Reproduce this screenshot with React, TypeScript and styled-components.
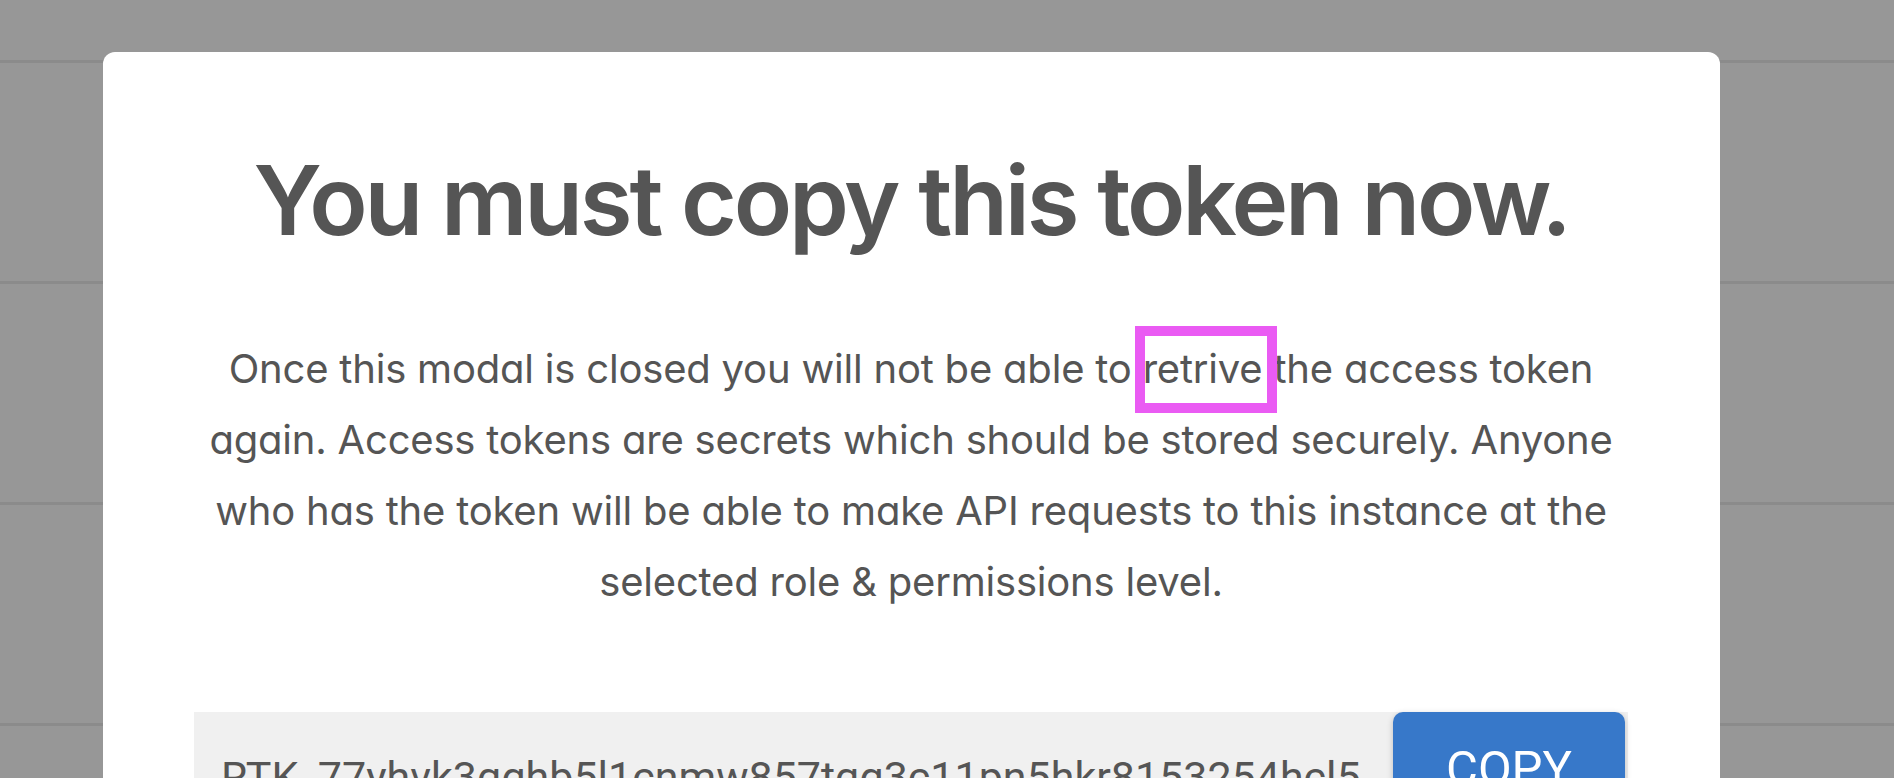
import styled, { createGlobalStyle } from 'styled-components';

const GlobalStyle = createGlobalStyle`
  html, body {
    margin: 0;
    padding: 0;
  }
  body {
    background-color: #979797;
    font-family: Inter, "Noto Sans", sans-serif;
    overflow: hidden;
  }
`;

const Page = styled.div`
  position: relative;
  height: 778px;
  overflow: hidden;
`;

const Table = styled.div`
  display: flex;
  flex-direction: column;
`;

const TableRow = styled.div<{ $first?: boolean }>`
  height: ${(p) => (p.$first ? 60 : 218)}px;
  border-bottom: 3px solid #8b8b8b;
`;

const Overlay = styled.div`
  position: absolute;
  inset: 0;
  display: flex;
  align-items: flex-start;
  padding: 52px 0 0 103px;
`;

const Modal = styled.div`
  width: 1617px;
  min-height: 900px;
  box-sizing: border-box;
  padding: 88px 92px 0 91px;
  background-color: #fff;
  border-radius: 12px;
  display: flex;
  flex-direction: column;
  align-items: center;
`;

const Title = styled.h1`
  margin: 0;
  font-size: 96px;
  line-height: 120px;
  font-weight: 600;
  letter-spacing: -3.2px;
  color: #555;
  text-align: center;
  white-space: nowrap;
`;

const Description = styled.p`
  margin: 73px 0 0;
  font-size: 40px;
  line-height: 71px;
  font-weight: 400;
  letter-spacing: -0.2px;
  color: #555;
  text-align: center;
  white-space: nowrap;
  font-feature-settings: 'cv11' 1;
`;

const Highlight = styled.span`
  position: relative;

  &::after {
    content: '';
    position: absolute;
    left: -8px;
    right: -15px;
    top: -18px;
    bottom: -20px;
    border: 10px solid #ea5bf3;
  }
`;

const TokenGroup = styled.div`
  margin-top: 95px;
  width: 100%;
  height: 130px;
  box-sizing: border-box;
  padding-right: 3px;
  display: flex;
  align-items: flex-start;
  background-color: #f0f0f0;
`;

const TokenInput = styled.input`
  flex: 1;
  min-width: 0;
  height: 130px;
  padding: 0 0 0 27px;
  border: none;
  outline: none;
  background: transparent;
  font-family: Roboto, "Liberation Sans", sans-serif;
  font-size: 43px;
  color: #555;
`;

const CopyButton = styled.button`
  width: 232px;
  height: 112px;
  margin-left: 30px;
  border: none;
  border-radius: 10px;
  background-color: #3778c9;
  box-shadow: 0 2px 6px rgba(0, 0, 0, 0.22);
  font-family: Roboto, "Liberation Sans", sans-serif;
  font-size: 49px;
  color: #fff;
  cursor: pointer;
`;

const TOKEN = 'RTK_77yhvk3qghb5l1cnmw857tqg3c11pn5hkr8153254hcl5';

export default function App() {
  return (
    <Page>
      <GlobalStyle />
      <Table>
        <TableRow $first />
        <TableRow />
        <TableRow />
        <TableRow />
      </Table>
      <Overlay>
        <Modal>
          <Title>You must copy this token now.</Title>
          <Description>
            Once this modal is closed you will not be able to <Highlight>retrive</Highlight> the access token
            <br />
            again. Access tokens are secrets which should be stored securely. Anyone
            <br />
            who has the token will be able to make API requests to this instance at the
            <br />
            selected role &amp; permissions level.
          </Description>
          <TokenGroup>
            <TokenInput type="text" readOnly value={TOKEN} />
            <CopyButton type="button">COPY</CopyButton>
          </TokenGroup>
        </Modal>
      </Overlay>
    </Page>
  );
}
